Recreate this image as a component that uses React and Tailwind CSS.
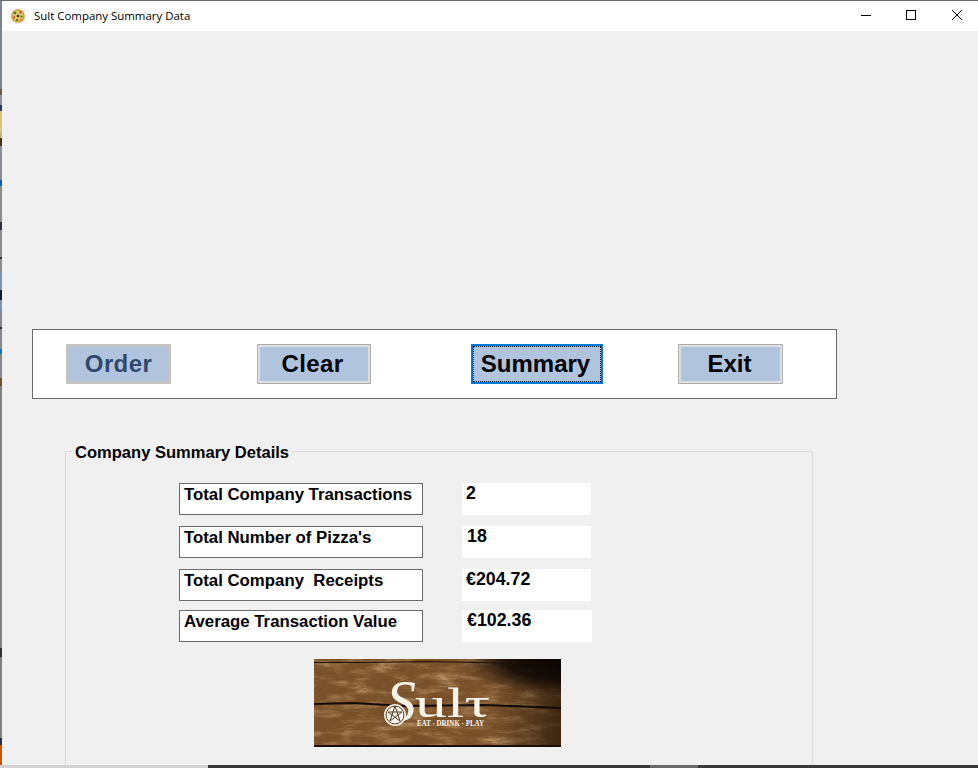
const strip = [
  [88, '#7d8290'], [6, '#6b5a3a'], [10, '#8f93a0'], [6, '#2c3a5a'], [21, '#d8c27c'], [6, '#c9b878'], [8, '#4a3418'],
  [34, '#8a8d94'], [6, '#0f5fb0'], [36, '#8b8d92'], [8, '#30343a'], [27, '#8b8d92'], [2, '#333333'], [13, '#8b8d92'],
  [18, '#7f93b0'], [10, '#101a40'], [11, '#7f93b0'], [16, '#85888e'], [2, '#333333'], [20, '#85888e'], [5, '#0f6fc0'],
  [24, '#85888e'], [8, '#6b5424'], [262, '#808080'], [9, '#303030'], [81, '#808080'], [7, '#24304f'], [20, '#c8540f'],
];

const rows = [
  { label: 'Total Company Transactions', value: '2', mt: 'mt-[22px]', w: 'w-[129px]', pl: 'pl-[4px]' },
  { label: "Total Number of Pizza's", value: '18', mt: 'mt-[11px]', w: 'w-[129px]', pl: 'pl-[5px]' },
  { label: 'Total Company  Receipts', value: '€204.72', mt: 'mt-[11px]', w: 'w-[129px]', pl: 'pl-[4px]' },
  { label: 'Average Transaction Value', value: '€102.36', mt: 'mt-[9px]', w: 'w-[130px]', pl: 'pl-[5px]' },
];

function PizzaIcon() {
  return (
    <svg width="16" height="16" viewBox="0 0 16 16" className="shrink-0">
      <rect width="16" height="16" fill="#f4f4f0" />
      <circle cx="8" cy="8" r="6.8" fill="#d19a3c" />
      <circle cx="8" cy="8" r="5.4" fill="#e0c66a" />
      <circle cx="5" cy="5" r="1.3" fill="#4c7a2a" />
      <circle cx="10.5" cy="4.4" r="1.1" fill="#c2441c" />
      <circle cx="8" cy="8" r="1.3" fill="#2c3a18" />
      <circle cx="4.2" cy="9.4" r="1.1" fill="#d4561f" />
      <circle cx="11.6" cy="8.6" r="1.2" fill="#5c8a2e" />
      <circle cx="7.2" cy="12" r="1.1" fill="#3e5a20" />
      <circle cx="11" cy="12" r="0.9" fill="#e0701c" />
    </svg>
  );
}

function WindowControls() {
  return (
    <svg width="102" height="30" viewBox="0 0 102 30" className="text-black">
      <path d="M0 14.5H10" stroke="currentColor" fill="none" />
      <rect x="45.5" y="9.5" width="9" height="9" stroke="currentColor" fill="none" />
      <path d="M91 9L101 19M101 9L91 19" stroke="currentColor" fill="none" />
    </svg>
  );
}

function Logo() {
  return (
    <svg width="247" height="88" viewBox="0 0 247 88" className="block">
      <defs>
        <filter id="wood" x="0" y="0" width="100%" height="100%">
          <feTurbulence type="fractalNoise" baseFrequency="0.035 0.14" numOctaves="5" seed="12" />
          <feColorMatrix values="0 0 0 0 0.66  0 0 0 0 0.42  0 0 0 0 0.2  1.6 0 0 0 -0.72" />
        </filter>
        <filter id="grain" x="0" y="0" width="100%" height="100%">
          <feTurbulence type="fractalNoise" baseFrequency="0.12 0.5" numOctaves="3" seed="5" />
          <feColorMatrix values="0 0 0 0 0.2  0 0 0 0 0.1  0 0 0 0 0.03  0 2.2 0 0 -0.92" />
        </filter>
        <radialGradient id="corner" cx="1" cy="0" r="0.42">
          <stop offset="0" stopColor="#060302" stopOpacity="0.96" />
          <stop offset="0.55" stopColor="#0c0603" stopOpacity="0.85" />
          <stop offset="1" stopColor="#1a0d04" stopOpacity="0" />
        </radialGradient>
        <linearGradient id="edge" x1="0" x2="1" y1="0" y2="0">
          <stop offset="0.72" stopColor="#1a0d04" stopOpacity="0" />
          <stop offset="1" stopColor="#1a0d04" stopOpacity="0.65" />
        </linearGradient>
      </defs>
      <rect width="247" height="88" fill="#7a5029" />
      <rect width="247" height="88" filter="url(#wood)" />
      <rect width="247" height="88" filter="url(#grain)" />
      <rect width="247" height="88" fill="url(#edge)" />
      <rect width="247" height="88" fill="url(#corner)" />
      <path d="M0 3.5H60L110 2.5L190 4L247 4" stroke="#1d1006" strokeWidth="1.2" fill="none" />
      <path d="M0 45L40 44L90 47L170 46L247 49" stroke="#140a04" strokeWidth="2.2" fill="none" />
      <path d="M0 87H247" stroke="#1a0e05" strokeWidth="2" />
      <g fill="#f8f4ec">
        <text x="72" y="62" fontFamily="'Liberation Serif', serif" fontSize="60" fontStyle="italic">S</text>
        <text x="101" y="58" fontFamily="'Liberation Serif', serif" fontSize="42" textLength="75" lengthAdjust="spacingAndGlyphs">ulτ</text>
        <text x="103" y="67" fontFamily="'Liberation Serif', serif" fontSize="7.5" fontWeight="700" textLength="67" lengthAdjust="spacingAndGlyphs">EAT · DRINK · PLAY</text>
        <circle cx="81" cy="56" r="11" />
      </g>
      <g fill="none" stroke="#5b3c20" strokeWidth="1">
        <circle cx="81" cy="56" r="9" />
        <path d="M81 47L86 62L74 53H88L76 62Z" />
      </g>
    </svg>
  );
}

function PanelButton({ children, className }) {
  return (
    <button className={`h-10 bg-[#b0c4de] text-[24px] font-bold font-['Liberation_Sans',sans-serif] leading-none ${className}`}>
      {children}
    </button>
  );
}

export default function App() {
  return (
    <div className="w-[978px] h-[768px] flex flex-col overflow-hidden bg-[#f0f0f0] font-['Liberation_Sans',sans-serif] text-black">
      <div className="h-px shrink-0 bg-[#6b6b6b]" />
      <div className="flex flex-1 min-h-0">
        <div className="w-[2px] shrink-0 flex flex-col">
          {strip.map(([h, c], i) => (
            <div key={i} style={{ height: h, backgroundColor: c }} />
          ))}
        </div>
        <div className="flex-1 min-w-0">
          <div className="h-[30px] bg-white flex items-center pl-[8px]">
            <PizzaIcon />
            <span className="ml-[8px] text-[11.45px] font-['Open_Sans',sans-serif] text-black">Sult Company Summary Data</span>
            <div className="ml-auto mr-[15px] flex items-center">
              <WindowControls />
            </div>
          </div>

          <div className="ml-[30px] mt-[298px] w-[805px] h-[70px] bg-white border border-[#6a6a6a] flex items-center pl-[33px]">
            <PanelButton className="w-[105px] border-[3px] border-[#c4c4c4] text-[#2f4a6f] tracking-[0.4px]">Order</PanelButton>
            <PanelButton className="ml-[86px] w-[114px] border-[3px] border-[#dedede] outline outline-1 -outline-offset-1 outline-[#adadad] tracking-[0.4px] pr-[3px]">Clear</PanelButton>
            <PanelButton className="ml-[100px] w-[132px] border-2 border-[#0078d7] outline outline-1 outline-dotted -outline-offset-3 outline-black pr-[3px]">Summary</PanelButton>
            <PanelButton className="ml-[75px] w-[105px] border-[3px] border-[#dedede] outline outline-1 -outline-offset-1 outline-[#adadad] pr-[2px]">Exit</PanelButton>
          </div>

          <fieldset className="ml-[63px] mt-[42px] w-[748px] h-[400px] border border-[#dcdcdc]">
            <legend className="ml-[6px] px-[3px] h-5 text-[16.55px] font-bold leading-[24px]">Company Summary Details</legend>
            <div className="pl-[113px]">
              {rows.map(({ label, value, mt, w, pl }) => (
                <div key={label} className={`flex ${mt}`}>
                  <div className="w-[244px] h-8 bg-white border border-[#6a6a6a] pl-1 text-[16.8px] font-bold leading-[22px] whitespace-pre">{label}</div>
                  <div className={`ml-[39px] h-8 bg-white ${w} ${pl} text-[17.8px] font-bold leading-[21px]`}>{value}</div>
                </div>
              ))}
              <div className="ml-[135px] mt-[17px] w-[247px]">
                <Logo />
              </div>
            </div>
          </fieldset>
        </div>
      </div>
      <div className="h-[3px] shrink-0 flex">
        <div className="w-[208px] bg-[#d2d2d2]" />
        <div className="w-[442px] bg-[#3a3a3a]" />
        <div className="w-[48px] bg-[#6a6a6a]" />
        <div className="flex-1 bg-[#3a3a3a]" />
      </div>
    </div>
  );
}
